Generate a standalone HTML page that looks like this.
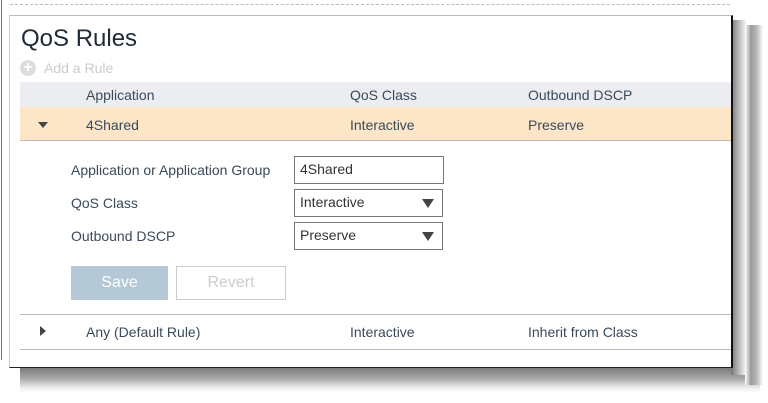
<!DOCTYPE html>
<html><head><style>
body{margin:0;width:768px;height:403px;background:#fff;position:relative;overflow:hidden;font-family:"Liberation Sans",sans-serif;color:#333;}
.sh2{position:absolute;left:731px;top:20px;width:16px;height:355px;background:linear-gradient(90deg,#777,#bbb,#fff);}
.sh3{position:absolute;left:745px;top:25px;width:18px;height:360px;background:linear-gradient(90deg,#fff,#999,#bbb,#fff);}
.sh4{position:absolute;left:20px;top:367px;width:740px;height:26px;background:linear-gradient(180deg,#777,#aaa 45%,#eee 80%,#fff);}
.panel{position:absolute;left:9px;top:15px;width:721px;height:351px;background:#fff;border-left:1px solid #ccc;border-top:1px solid #bbb;border-right:2px solid #111;border-bottom:1px solid #222;}
.lft{position:absolute;left:1px;top:0;width:1px;height:360px;background:#777;}
.top{position:absolute;left:10px;top:4px;width:720px;border-top:1px dashed #bbb}
.t{position:absolute;font-size:14px;color:#3a4a5a;white-space:nowrap}
h1{position:absolute;left:11px;top:9px;margin:0;font-weight:normal;font-size:24px;color:#1e2a36}
.row{position:absolute;left:10px;width:711px}
.box{position:absolute;border:1px solid #777;background:#fff;height:26px;box-sizing:border-box;font-size:14px;padding:4px 5px;color:#333}
.tri{position:absolute;right:8px;top:9px;width:0;height:0;border-left:6px solid transparent;border-right:6px solid transparent;border-top:9px solid #444}
</style></head><body>
<div class="sh4"></div><div class="sh2"></div><div class="sh3"></div>
<div class="lft"></div><div class="top"></div>
<div class="panel">
<h1>QoS Rules</h1>
<div style="position:absolute;left:10px;top:44px;width:16px;height:16px;border-radius:50%;background:#ddd;color:#fff;font-size:16px;line-height:16px;text-align:center;font-weight:bold">+</div>
<div class="t" style="left:34px;top:44px;color:#ccc">Add a Rule</div>
<div class="row" style="top:66px;height:25px;background:#ebedf0"></div>
<div class="row" style="top:91px;height:33px;background:#fde6c8;border-bottom:1px solid #bbb"></div>
<div class="t" style="left:76px;top:71px">Application</div>
<div class="t" style="left:340px;top:71px">QoS Class</div>
<div class="t" style="left:518px;top:71px">Outbound DSCP</div>
<div style="position:absolute;left:28px;top:106px;border-left:5px solid transparent;border-right:5px solid transparent;border-top:6px solid #444"></div>
<div class="t" style="left:76px;top:101px">4Shared</div>
<div class="t" style="left:340px;top:101px">Interactive</div>
<div class="t" style="left:518px;top:101px">Preserve</div>
<div class="t" style="left:61px;top:146px">Application or Application Group</div>
<div class="t" style="left:61px;top:179px">QoS Class</div>
<div class="t" style="left:61px;top:212px">Outbound DSCP</div>
<div class="box" style="left:284px;top:140px;width:150px;height:28px">4Shared</div>
<div class="box" style="left:284px;top:173px;width:149px;height:28px">Interactive<div class="tri"></div></div>
<div class="box" style="left:284px;top:206px;width:149px;height:28px">Preserve<div class="tri"></div></div>
<div style="position:absolute;left:61px;top:250px;width:97px;height:34px;background:#b5c8d6;color:#fff;font-size:16px;text-align:center;line-height:34px">Save</div>
<div style="position:absolute;left:166px;top:250px;width:108px;height:32px;border:1px solid #ccc;color:#ccc;font-size:16px;text-align:center;line-height:32px">Revert</div>
<div class="row" style="top:298px;height:34px;border-top:1px solid #bbb;border-bottom:1px solid #bbb"></div>
<div style="position:absolute;left:30px;top:310px;border-top:5px solid transparent;border-bottom:5px solid transparent;border-left:6px solid #444"></div>
<div class="t" style="left:76px;top:308px">Any (Default Rule)</div>
<div class="t" style="left:340px;top:308px">Interactive</div>
<div class="t" style="left:518px;top:308px">Inherit from Class</div>
</div>
</body></html>
